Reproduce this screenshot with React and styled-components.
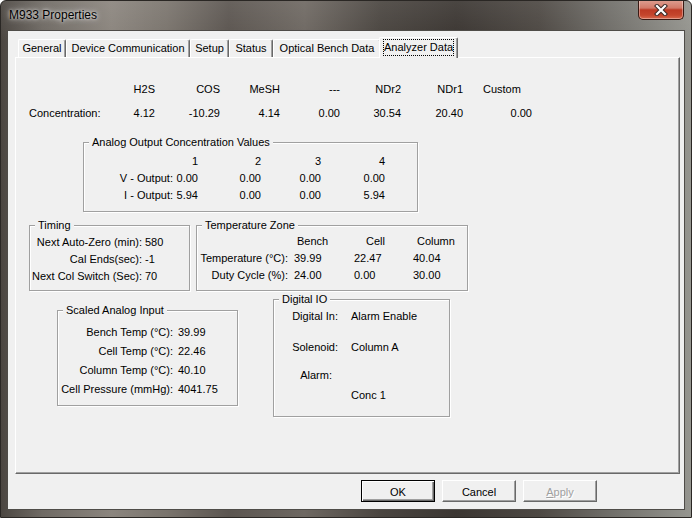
import React from 'react'
import styled, { createGlobalStyle } from 'styled-components'

const GlobalStyle = createGlobalStyle`
  html, body {
    margin: 0;
    padding: 0;
    background: #fff;
  }
  body {
    font-family: "Liberation Sans", Arial, sans-serif;
    font-size: 11px;
    color: #000;
  }
  * {
    box-sizing: border-box;
  }
`

const Window = styled.div`
  width: 692px;
  height: 518px;
  display: flex;
  flex-direction: column;
  overflow: hidden;
  background:
    linear-gradient(180deg, rgba(255,255,255,0.08), rgba(0,0,0,0) 40px),
    linear-gradient(90deg, #4b4641 0%, #6f6a64 6%, #8b857e 16%, #7a746d 24%, #5b5550 33%, #6e6862 44%, #4a4540 55%, #3b3632 66%, #4d4843 78%, #6f6d68 88%, #95958f 100%);
  border: 1px solid #2a2724;
  border-radius: 6px 6px 0 0;
`

const TitleBar = styled.div`
  height: 29px;
  display: flex;
  align-items: flex-start;
  flex-shrink: 0;
`

const Title = styled.div`
  font-size: 12px;
  line-height: 14px;
  padding: 7px 0 0 8px;
  color: #000;
  text-shadow: 0 0 6px rgba(255,255,255,0.9), 0 0 3px rgba(255,255,255,0.7);
`

const CloseButton = styled.div`
  margin-left: auto;
  margin-right: 7px;
  margin-top: -1px;
  width: 46px;
  height: 20px;
  display: flex;
  align-items: center;
  justify-content: center;
  border: 1px solid #3a1a14;
  border-top: none;
  border-radius: 0 0 5px 5px;
  background: linear-gradient(180deg, #dea092 0%, #d27a68 42%, #bd3a24 52%, #c5462d 80%, #d86a4e 100%);
  box-shadow: inset 0 0 0 1px rgba(255,255,255,0.35);
`

const Client = styled.div`
  flex: 1;
  margin: 0 6px 7px 6px;
  border: 1px solid #4f4c48;
  background: #f0f0f0;
  padding-top: 6px;
  display: flex;
  flex-direction: column;
`

const TabArea = styled.div`
  margin-left: 7px;
  width: 665px;
`

const TabStrip = styled.div`
  height: 20px;
  display: flex;
  align-items: flex-end;
  padding-left: 3px;
`

const Tab = styled.div`
  position: relative;
  width: ${p => p.$w}px;
  height: ${p => (p.$active ? 21 : 18)}px;
  margin: ${p => (p.$active ? '0 -2px -1px -2px' : '0')};
  padding: ${p => (p.$active ? '1px 3px 0' : '2px 0 0')};
  text-align: ${p => (p.$active ? 'left' : 'center')};
  line-height: 13px;
  white-space: nowrap;
  background: #f0f0f0;
  border-top: 1px solid #fff;
  border-left: 1px solid #fff;
  border-right: 1px solid #696969;
  box-shadow: inset -1px 0 0 #a0a0a0;
  border-radius: 2px 2px 0 0;
  z-index: ${p => (p.$active ? 1 : 0)};
`

const FocusText = styled.span`
  display: inline-block;
  border: 1px dotted #000;
  line-height: 15px;
`

const Panel = styled.div`
  height: 417px;
  border: 1px solid;
  border-color: #fff #696969 #696969 #fff;
  box-shadow: inset -1px -1px 0 #a0a0a0;
  background: #f0f0f0;
  display: flex;
  flex-direction: column;
  align-items: flex-start;
`

const DataGrid = styled.div`
  display: grid;
  grid-template-columns: ${p => p.$cols};
  grid-auto-rows: 13px;
  row-gap: ${p => p.$gap}px;
  padding-top: ${p => p.$pt || 0}px;
  margin: ${p => p.$m || '0'};
  line-height: 13px;
  white-space: nowrap;
`

const Cell = styled.div`
  text-align: ${p => p.$align || 'left'};
  padding-left: ${p => p.$indent || 0}px;
  padding-right: ${p => p.$pr || 0}px;
`

const Group = styled.div`
  position: relative;
  flex-shrink: 0;
  width: ${p => p.$w}px;
  height: ${p => p.$h}px;
  margin: ${p => p.$m || '0'};
  border: 1px solid #a0a0a0;
  box-shadow: inset 1px 1px 0 #fff, 1px 1px 0 #fff;
`

const GroupTitle = styled.span`
  position: absolute;
  top: -7px;
  left: 5px;
  padding: 0 3px;
  background: #f0f0f0;
  line-height: 13px;
  white-space: nowrap;
`

const BoxRow = styled.div`
  display: flex;
  align-items: flex-start;
  gap: ${p => p.$gap || 0}px;
  margin: ${p => p.$m || '0'};
`

const DigitalRow = styled.div`
  display: grid;
  grid-template-columns: 64px 1fr;
  margin-top: ${p => p.$mt}px;
  line-height: 13px;
  white-space: nowrap;
`

const DigitalValue = styled.div`
  padding-left: 13px;
  padding-top: ${p => p.$pt || 0}px;
`

const ButtonRow = styled.div`
  display: flex;
  gap: 7px;
  margin-top: 6px;
  padding-left: 353px;
`

const Button = styled.div`
  width: 74px;
  height: 22px;
  display: flex;
  align-items: center;
  justify-content: center;
  background: #f0f0f0;
  border: 1px solid;
  border-color: ${p => (p.$default ? '#000' : '#fff #696969 #696969 #fff')};
  box-shadow: ${p =>
    p.$default
      ? 'inset 1px 1px 0 #fff, inset -1px -1px 0 #696969, inset -2px -2px 0 #a0a0a0'
      : 'inset -1px -1px 0 #a0a0a0'};
  color: ${p => (p.$disabled ? '#a0a0a0' : '#000')};
  text-shadow: ${p => (p.$disabled ? '1px 1px 0 #fff' : 'none')};
  padding-top: 1px;
`

const tabs = [
  { label: 'General', w: 48 },
  { label: 'Device Communication', w: 124 },
  { label: 'Setup', w: 39 },
  { label: 'Status', w: 44 },
  { label: 'Optical Bench Data', w: 108 },
  { label: 'Analyzer Data', w: 79, active: true },
]

const gases = ['H2S', 'COS', 'MeSH', '---', 'NDr2', 'NDr1']
const concentrations = ['4.12', '-10.29', '4.14', '0.00', '30.54', '20.40', '0.00']

const analog = [
  { label: 'V - Output:', values: ['0.00', '0.00', '0.00', '0.00'] },
  { label: 'I - Output:', values: ['5.94', '0.00', '0.00', '5.94'] },
]

const timing = [
  ['Next Auto-Zero (min):', '580'],
  ['Cal Ends(sec):', '-1'],
  ['Next Col Switch (Sec):', '70'],
]

const scaled = [
  ['Bench Temp (°C):', '39.99'],
  ['Cell Temp (°C):', '22.46'],
  ['Column Temp (°C):', '40.10'],
  ['Cell Pressure (mmHg):', '4041.75'],
]

const CloseGlyph = () => (
  <svg width="14" height="12" viewBox="0 0 14 12">
    <path d="M3 2 L11 10 M11 2 L3 10" stroke="#3b2a26" strokeWidth="4.2" strokeLinecap="square" />
    <path d="M3 2 L11 10 M11 2 L3 10" stroke="#fff" strokeWidth="2.2" strokeLinecap="square" />
  </svg>
)

const App = () => {
  return (
    <>
      <GlobalStyle />
      <Window>
        <TitleBar>
          <Title>M933 Properties</Title>
          <CloseButton>
            <CloseGlyph />
          </CloseButton>
        </TitleBar>
        <Client>
          <TabArea>
            <TabStrip>
              {tabs.map(t => (
                <Tab key={t.label} $w={t.w} $active={t.active}>
                  {t.active ? <FocusText>{t.label}</FocusText> : t.label}
                </Tab>
              ))}
            </TabStrip>
            <Panel>
              <DataGrid $cols="96px 30px 65px 60px 60px 61px 62px 69px" $gap={11} $m="25px 0 0 13px">
                <Cell />
                {gases.map(g => (
                  <Cell key={g} $align="right">{g}</Cell>
                ))}
                <Cell $indent={20}>Custom</Cell>
                <Cell>Concentration:</Cell>
                {concentrations.map((c, i) => (
                  <Cell key={i} $align="right">{c}</Cell>
                ))}
              </DataGrid>

              <Group $w={335} $h={70} $m="22px 0 0 67px">
                <GroupTitle>Analog Output Concentration Values</GroupTitle>
                <DataGrid $cols="89px 25px 63px 60px 64px" $gap={4} $pt={12}>
                  <Cell />
                  {['1', '2', '3', '4'].map(n => (
                    <Cell key={n} $align="right">{n}</Cell>
                  ))}
                  {analog.map(row => (
                    <React.Fragment key={row.label}>
                      <Cell $align="right">{row.label}</Cell>
                      {row.values.map((v, i) => (
                        <Cell key={i} $align="right">{v}</Cell>
                      ))}
                    </React.Fragment>
                  ))}
                </DataGrid>
              </Group>

              <BoxRow $gap={6} $m="13px 0 0 13px">
                <Group $w={161} $h={66}>
                  <GroupTitle>Timing</GroupTitle>
                  <DataGrid $cols="112px 1fr" $gap={4} $pt={10}>
                    {timing.map(([label, value]) => (
                      <React.Fragment key={label}>
                        <Cell $align="right">{label}</Cell>
                        <Cell $indent={3}>{value}</Cell>
                      </React.Fragment>
                    ))}
                  </DataGrid>
                </Group>
                <Group $w={272} $h={66}>
                  <GroupTitle>Temperature Zone</GroupTitle>
                  <DataGrid $cols="91px 66px 59px 1fr" $gap={4} $pt={9}>
                    <Cell />
                    <Cell $indent={9}>Bench</Cell>
                    <Cell $indent={12}>Cell</Cell>
                    <Cell $indent={4}>Column</Cell>
                    <Cell $align="right">Temperature (°C):</Cell>
                    <Cell $indent={6}>39.99</Cell>
                    <Cell>22.47</Cell>
                    <Cell>40.04</Cell>
                    <Cell $align="right">Duty Cycle (%):</Cell>
                    <Cell $indent={6}>24.00</Cell>
                    <Cell>0.00</Cell>
                    <Cell>30.00</Cell>
                  </DataGrid>
                </Group>
              </BoxRow>

              <BoxRow>
                <Group $w={181} $h={96} $m="19px 0 0 41px">
                  <GroupTitle>Scaled Analog Input</GroupTitle>
                  <DataGrid $cols="115px 1fr" $gap={6} $pt={15}>
                    {scaled.map(([label, value]) => (
                      <React.Fragment key={label}>
                        <Cell $align="right">{label}</Cell>
                        <Cell $indent={5}>{value}</Cell>
                      </React.Fragment>
                    ))}
                  </DataGrid>
                </Group>
                <Group $w={177} $h={118} $m="8px 0 0 35px">
                  <GroupTitle>Digital IO</GroupTitle>
                  <DigitalRow $mt={10}>
                    <Cell $align="right">Digital In:</Cell>
                    <DigitalValue>Alarm Enable</DigitalValue>
                  </DigitalRow>
                  <DigitalRow $mt={18}>
                    <Cell $align="right">Solenoid:</Cell>
                    <DigitalValue>Column A</DigitalValue>
                  </DigitalRow>
                  <DigitalRow $mt={15}>
                    <Cell $align="right" $pr={6}>Alarm:</Cell>
                    <DigitalValue $pt={20}>Conc 1</DigitalValue>
                  </DigitalRow>
                </Group>
              </BoxRow>
            </Panel>
          </TabArea>
          <ButtonRow>
            <Button $default>OK</Button>
            <Button>Cancel</Button>
            <Button $disabled><span><u>A</u>pply</span></Button>
          </ButtonRow>
        </Client>
      </Window>
    </>
  )
}

export default App
